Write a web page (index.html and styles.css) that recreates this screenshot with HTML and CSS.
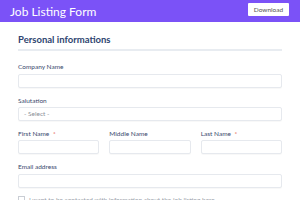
FILE: index.html
```html
<!DOCTYPE html>
<html>
<head>
<meta charset="utf-8">
<link rel="stylesheet" href="styles.css">
</head>
<body>
<header class="topbar">
  <h1 class="title">Job Listing Form</h1>
  <button class="download">Download</button>
</header>
<main class="form">
  <h2 class="section">Personal informations</h2>
  <div class="field">
    <label class="label">Company Name</label>
    <div class="input"></div>
  </div>
  <div class="field">
    <label class="label">Salutation</label>
    <div class="input select">- Select -</div>
  </div>
  <div class="row">
    <div class="field">
      <label class="label">First Name <span class="req">*</span></label>
      <div class="input"></div>
    </div>
    <div class="field">
      <label class="label">Middle Name</label>
      <div class="input"></div>
    </div>
    <div class="field">
      <label class="label">Last Name <span class="req">*</span></label>
      <div class="input"></div>
    </div>
  </div>
  <div class="field">
    <label class="label">Email address</label>
    <div class="input"></div>
  </div>
  <div class="consent"><span class="box"></span>I want to be contacted with information about the job listing here</div>
</main>
</body>
</html>
```
FILE: styles.css
```css
html, body {
  margin: 0;
  padding: 0;
  background: #ffffff;
  font-family: Lato, "Open Sans", sans-serif;
  overflow: hidden;
}
.topbar {
  height: 22px;
  background: #7b52f7;
  display: flex;
  align-items: center;
  justify-content: space-between;
  padding: 0 11px 0 10px;
  box-sizing: border-box;
}
.title {
  margin: 0;
  font-size: 12px;
  font-weight: 400;
  color: #ffffff;
  line-height: 14px;
  margin-top: 1px;
}
.download {
  margin: 0;
  margin-top: -3px;
  height: 13px;
  width: 41px;
  border: none;
  border-radius: 1px;
  background: #ffffff;
  color: #555;
  font-family: Lato, "Open Sans", sans-serif;
  font-size: 6.5px;
  padding: 0;
}
.form {
  padding: 12px 18px 0 18px;
}
.section {
  margin: 0;
  font-size: 9.5px;
  font-weight: 700;
  color: #2e4470;
  line-height: 12px;
  padding-bottom: 3px;
  border-bottom: 2px solid #e8ecf1;
  margin-bottom: 11px;
}
.field {
  display: flex;
  flex-direction: column;
  margin-bottom: 8px;
}
.label {
  font-size: 6.5px;
  line-height: 9px;
  color: #3a4a6e;
  margin-bottom: 2.5px;
}
.req {
  color: #e5533d;
  margin-left: 2px;
}
.input {
  height: 14px;
  box-sizing: border-box;
  border: 1px solid #e6e9ee;
  border-radius: 2px;
  box-shadow: 0 1px 1px rgba(0,0,0,0.03);
  background: #fff;
}
.select {
  font-size: 6.5px;
  color: #8a8f99;
  line-height: 12px;
  padding-left: 5px;
  height: 13.5px;
}
.row {
  display: grid;
  grid-template-columns: 1fr 1fr 1fr;
  column-gap: 10px;
}
.consent {
  margin-top: 1px;
  font-size: 6.5px;
  color: #9aa0aa;
  display: flex;
  align-items: center;
  white-space: nowrap;
}
.box {
  width: 5px;
  height: 5px;
  border: 1px solid #c9cdd4;
  margin-right: 4px;
}
```
